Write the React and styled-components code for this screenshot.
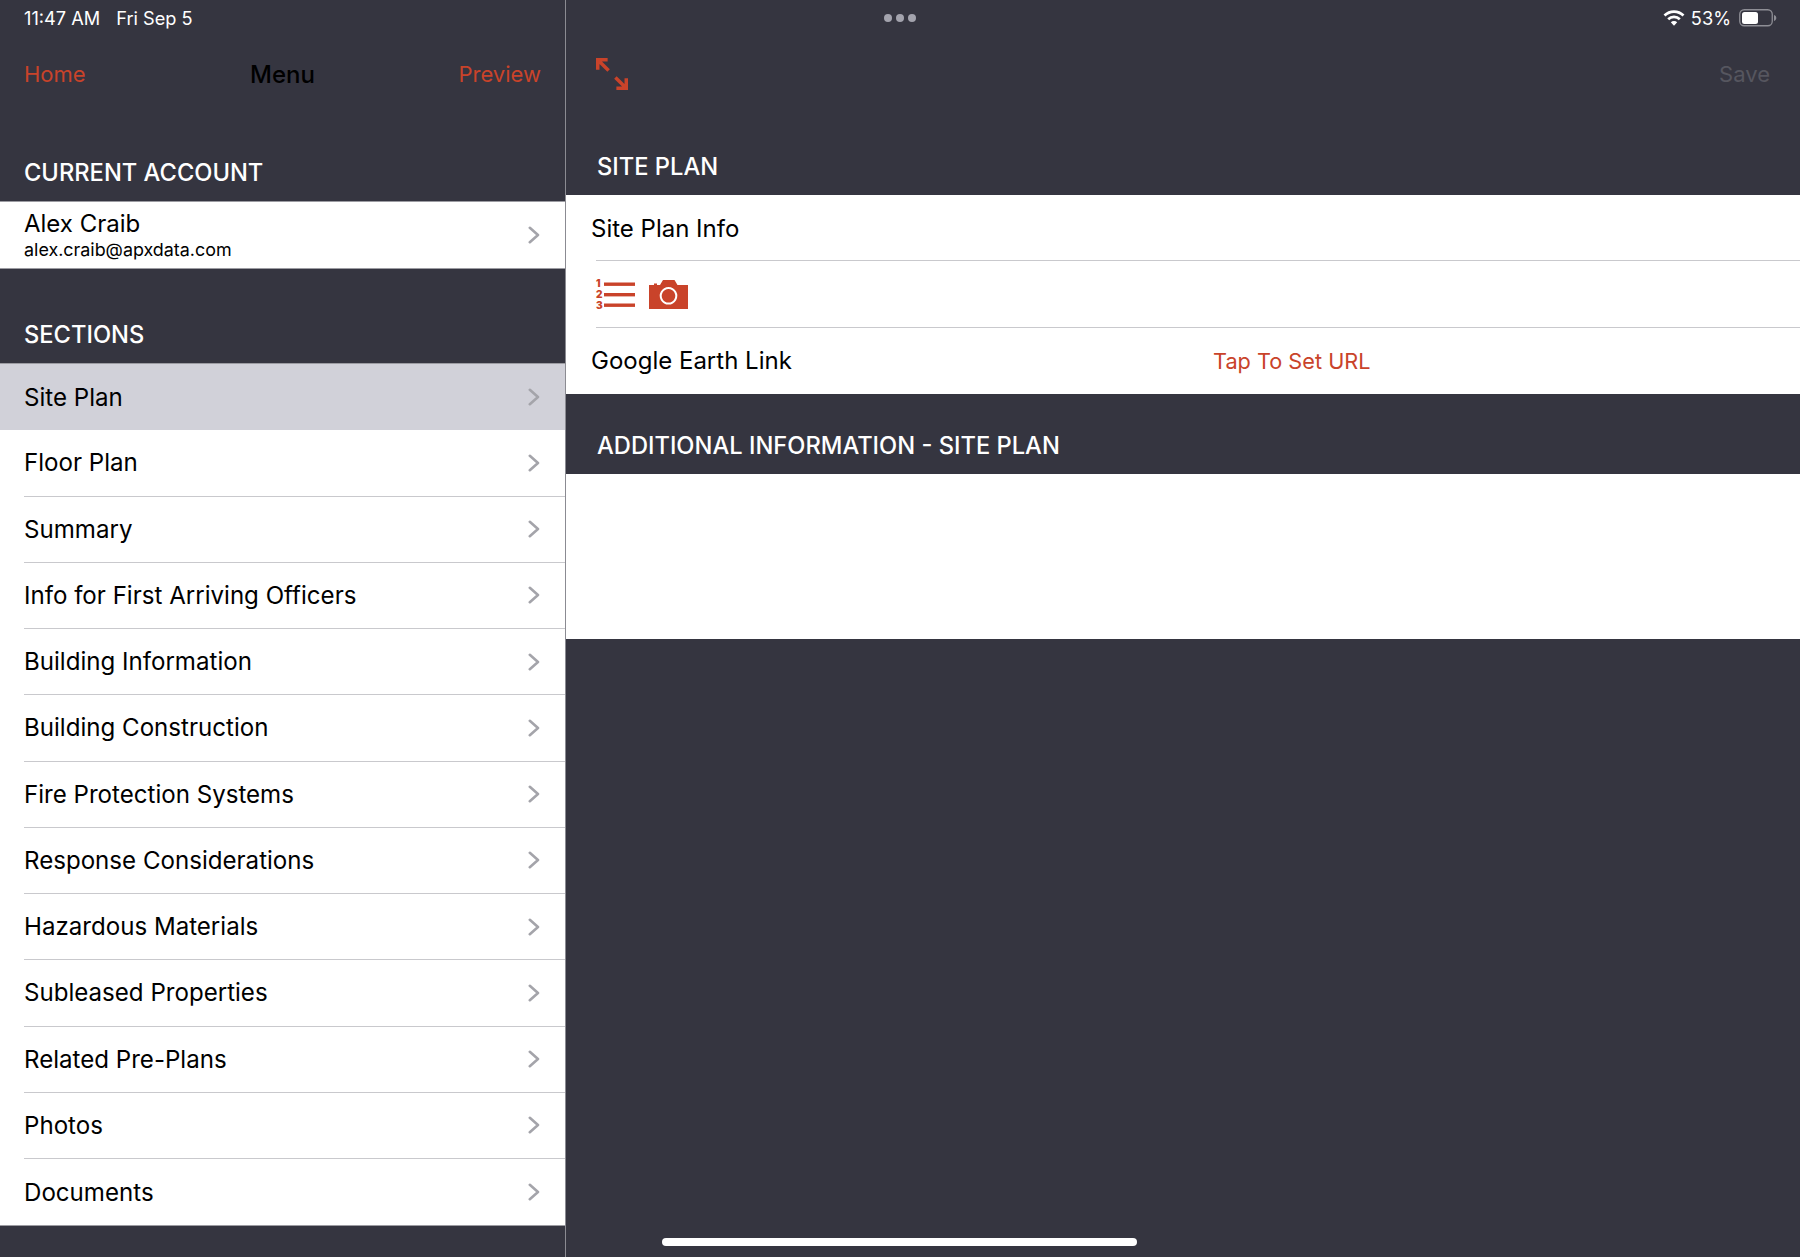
import React from 'react';
import styled, { createGlobalStyle } from 'styled-components';

const DARK = '#353540';
const RED = '#c9432a';

const GlobalStyle = createGlobalStyle`
  html, body {
    margin: 0;
    padding: 0;
    background: ${DARK};
  }
  body {
    font-family: Inter, "Noto Sans", "Liberation Sans", sans-serif;
    -webkit-font-smoothing: antialiased;
  }
`;

const sections = [
  'Site Plan',
  'Floor Plan',
  'Summary',
  'Info for First Arriving Officers',
  'Building Information',
  'Building Construction',
  'Fire Protection Systems',
  'Response Considerations',
  'Hazardous Materials',
  'Subleased Properties',
  'Related Pre-Plans',
  'Photos',
  'Documents'
];

const Chevron = () => (
  <ChevronSvg viewBox="0 0 12 18" fill="none">
    <path d="M1.800 1.800l8.200 7.200-8.200 7.200" stroke="#a4a4aa" strokeWidth="2.600" strokeLinecap="round" strokeLinejoin="round" />
  </ChevronSvg>
);

const ExpandIcon = () => (
  <svg width="32" height="32" viewBox="0 0 33 33" fill="none" stroke={RED} strokeWidth="3.600">
    <path d="M1.800 12V1.800H12M2.500 2.500L13 13" />
    <path d="M31.200 21v10.200H21M30.500 30.500L20 20" />
  </svg>
);

const ListIcon = () => (
  <ListSvg width="39" height="32" viewBox="0 0 39 32">
    <g fill={RED} fontFamily="Inter, sans-serif" fontWeight="900" fontSize="10">
      <text x="0" y="9">1</text>
      <text x="0" y="20">2</text>
      <text x="0" y="30.500">3</text>
    </g>
    <g fill={RED}>
      <rect x="8" y="4.500" width="31" height="3.400" />
      <rect x="8" y="15" width="31" height="3.400" />
      <rect x="8" y="25.500" width="31" height="3.400" />
    </g>
  </ListSvg>
);

const CameraIcon = () => (
  <svg width="39" height="29" viewBox="0 0 39 29">
    <path
      fillRule="evenodd"
      fill={RED}
      d="M0 5h5V3.500h3V5h3l3-5h11.500l3 5H39v24H0zM19.500 7a8.800 8.800 0 1 0 .01 0zM19.500 9a6.800 6.800 0 1 1-.01 0z"
    />
  </svg>
);

const WifiIcon = () => (
  <WifiSvg width="22" height="16" viewBox="0 0 22 16" fill="none" stroke="#fff" strokeWidth="2.700">
    <path d="M1.500 5.500a13.500 13.500 0 0 1 19 0" />
    <path d="M5.200 9.300a8.300 8.300 0 0 1 11.600 0" />
    <path d="M11 15.800l-3.200-3.500a4.500 4.500 0 0 1 6.400 0z" fill="#fff" stroke="none" />
  </WifiSvg>
);

const BatteryIcon = () => (
  <svg width="38" height="18" viewBox="0 0 38 18" fill="none">
    <rect x="0.750" y="0.750" width="32.500" height="16" rx="4.500" stroke="#8e8e95" strokeWidth="1.300" />
    <rect x="3" y="3" width="16" height="12" rx="2.500" fill="#fff" />
    <path d="M35 6c1.500.400 2.300 1.600 2.300 3s-.800 2.600-2.300 3z" fill="#8e8e95" />
  </svg>
);

export default function App() {
  return (
    <>
      <GlobalStyle />
      <Screen>
        <StatusBar>
          <StatusClock>
            <span>11:47 AM</span>
            <span>Fri Sep 5</span>
          </StatusClock>
          <Dots>
            <i />
            <i />
            <i />
          </Dots>
          <StatusRight>
            <WifiIcon />
            <span>53%</span>
            <BatteryIcon />
          </StatusRight>
        </StatusBar>

        <Sidebar>
          <NavBar>
            <NavLink>Home</NavLink>
            <NavTitle>Menu</NavTitle>
            <NavLink $right>Preview</NavLink>
          </NavBar>

          <SideHeader $height={92}>CURRENT ACCOUNT</SideHeader>
          <MenuGroup>
            <MenuRow $height={65.5}>
              <MenuInner>
                <Account>
                  <AccountName>Alex Craib</AccountName>
                  <AccountMail>alex.craib@apxdata.com</AccountMail>
                </Account>
                <Chevron />
              </MenuInner>
            </MenuRow>
          </MenuGroup>

          <SideHeader $height={96.5}>SECTIONS</SideHeader>
          <MenuGroup>
            {sections.map((name, i) => (
              <MenuRow key={name} $height={66.25} $active={i === 0}>
                <MenuInner $line={i > 0 && i < sections.length - 1}>
                  <span>{name}</span>
                  <Chevron />
                </MenuInner>
              </MenuRow>
            ))}
          </MenuGroup>
        </Sidebar>

        <Detail>
          <DetailNav>
            <ExpandIcon />
            <SaveLink>Save</SaveLink>
          </DetailNav>

          <DetailHeader $height={85}>SITE PLAN</DetailHeader>
          <FormGroup>
            <FormRow>
              <FormInner $line>Site Plan Info</FormInner>
            </FormRow>
            <FormRow>
              <FormInner $line>
                <IconTools>
                  <ListIcon />
                  <CameraIcon />
                </IconTools>
              </FormInner>
            </FormRow>
            <FormRow>
              <FormInner>
                <FormLabel>Google Earth Link</FormLabel>
                <FormAction>Tap To Set URL</FormAction>
              </FormInner>
            </FormRow>
          </FormGroup>

          <DetailHeader $height={80}>ADDITIONAL INFORMATION - SITE PLAN</DetailHeader>
          <NotesBox />
        </Detail>

        <HomeBar />
      </Screen>
    </>
  );
}

const Screen = styled.div`
  position: relative;
  display: flex;
  width: 1800px;
  height: 1257px;
  overflow: hidden;
  background: ${DARK};
`;

const StatusBar = styled.div`
  position: absolute;
  top: 0;
  left: 0;
  right: 0;
  height: 35px;
  padding: 0 24px;
  display: grid;
  grid-template-columns: 1fr auto 1fr;
  align-items: center;
  color: #fff;
  font-size: 18.2px;
`;

const StatusClock = styled.div`
  display: flex;
  gap: 16px;
`;

const Dots = styled.div`
  display: flex;
  gap: 4px;

  i {
    width: 8px;
    height: 8px;
    border-radius: 50%;
    background: #a3a3ad;
  }
`;

const StatusRight = styled.div`
  display: flex;
  justify-content: flex-end;
  align-items: center;
  gap: 8px;
  margin-right: -1px;
`;

const WifiSvg = styled.svg`
  margin-right: -2px;
`;

const ListSvg = styled.svg`
  overflow: visible;
`;

const Sidebar = styled.div`
  width: 565px;
  flex: none;
  border-right: 1px solid #8b8b92;
`;

const NavBar = styled.div`
  height: 110px;
  padding: 38px 24px 0 24px;
  box-sizing: border-box;
  display: grid;
  grid-template-columns: 1fr auto 1fr;
  align-items: center;
`;

const NavLink = styled.div`
  color: ${RED};
  font-size: 22px;
  text-align: ${p => (p.$right ? 'right' : 'left')};
`;

const NavTitle = styled.div`
  color: #000;
  font-size: 24px;
  font-weight: 500;
`;

const SideHeader = styled.div`
  height: ${p => p.$height}px;
  padding: 0 24px 15px;
  box-sizing: border-box;
  display: flex;
  align-items: flex-end;
  color: #fff;
  font-size: 23.7px;
  font-weight: 500;
`;

const MenuGroup = styled.div`
  background: #fff;
  box-shadow: 0 1px 0 #9c9ca2, 0 -1px 0 #9c9ca2;
`;

const MenuRow = styled.div`
  height: ${p => p.$height}px;
  padding-left: 24px;
  background: ${p => (p.$active ? '#d1d1d9' : '#fff')};
  font-size: 24.1px;
  color: #000;
`;

const MenuInner = styled.div`
  height: 100%;
  padding-right: 25px;
  box-sizing: border-box;
  display: flex;
  justify-content: space-between;
  align-items: center;
  border-bottom: ${p => (p.$line ? '1px solid #c9c9cd' : 'none')};
`;

const ChevronSvg = styled.svg`
  width: 12px;
  height: 18px;
  flex: none;
`;

const Account = styled.div`
  display: flex;
  flex-direction: column;
  gap: 2px;
  padding-top: 1px;
`;

const AccountName = styled.div`
  font-size: 24px;
  line-height: 28px;
`;

const AccountMail = styled.div`
  font-size: 17.9px;
  line-height: 20px;
`;

const Detail = styled.div`
  flex: 1;
`;

const DetailNav = styled.div`
  height: 110px;
  padding: 37px 30px 0 30px;
  box-sizing: border-box;
  display: flex;
  justify-content: space-between;
  align-items: center;
`;

const SaveLink = styled.div`
  color: #56565f;
  font-size: 22px;
`;

const DetailHeader = styled.div`
  height: ${p => p.$height}px;
  padding: 0 30px 14px 31px;
  box-sizing: border-box;
  display: flex;
  align-items: flex-end;
  color: #fff;
  font-size: 23.7px;
  font-weight: 500;
`;

const FormGroup = styled.div`
  background: #fff;
`;

const FormRow = styled.div`
  height: 66.33px;
  padding-left: 25px;
  font-size: 24px;
  color: #000;
`;

const FormInner = styled.div`
  height: 100%;
  box-sizing: border-box;
  display: flex;
  align-items: center;
  position: relative;

  ${p =>
    p.$line &&
    `
    &::after {
      content: '';
      position: absolute;
      left: 5px;
      right: 0;
      bottom: 0;
      height: 1px;
      background: #c9c9cd;
    }
  `}
`;

const FormLabel = styled.div`
  width: 622px;
`;

const FormAction = styled.div`
  color: ${RED};
  font-size: 21.7px;
`;

const IconTools = styled.div`
  display: flex;
  align-items: center;
  gap: 14px;
  padding-left: 5px;
`;

const NotesBox = styled.div`
  height: 165.5px;
  background: #fff;
`;

const HomeBar = styled.div`
  position: absolute;
  left: 662px;
  bottom: 11px;
  width: 475px;
  height: 8px;
  border-radius: 4px;
  background: #fff;
`;
